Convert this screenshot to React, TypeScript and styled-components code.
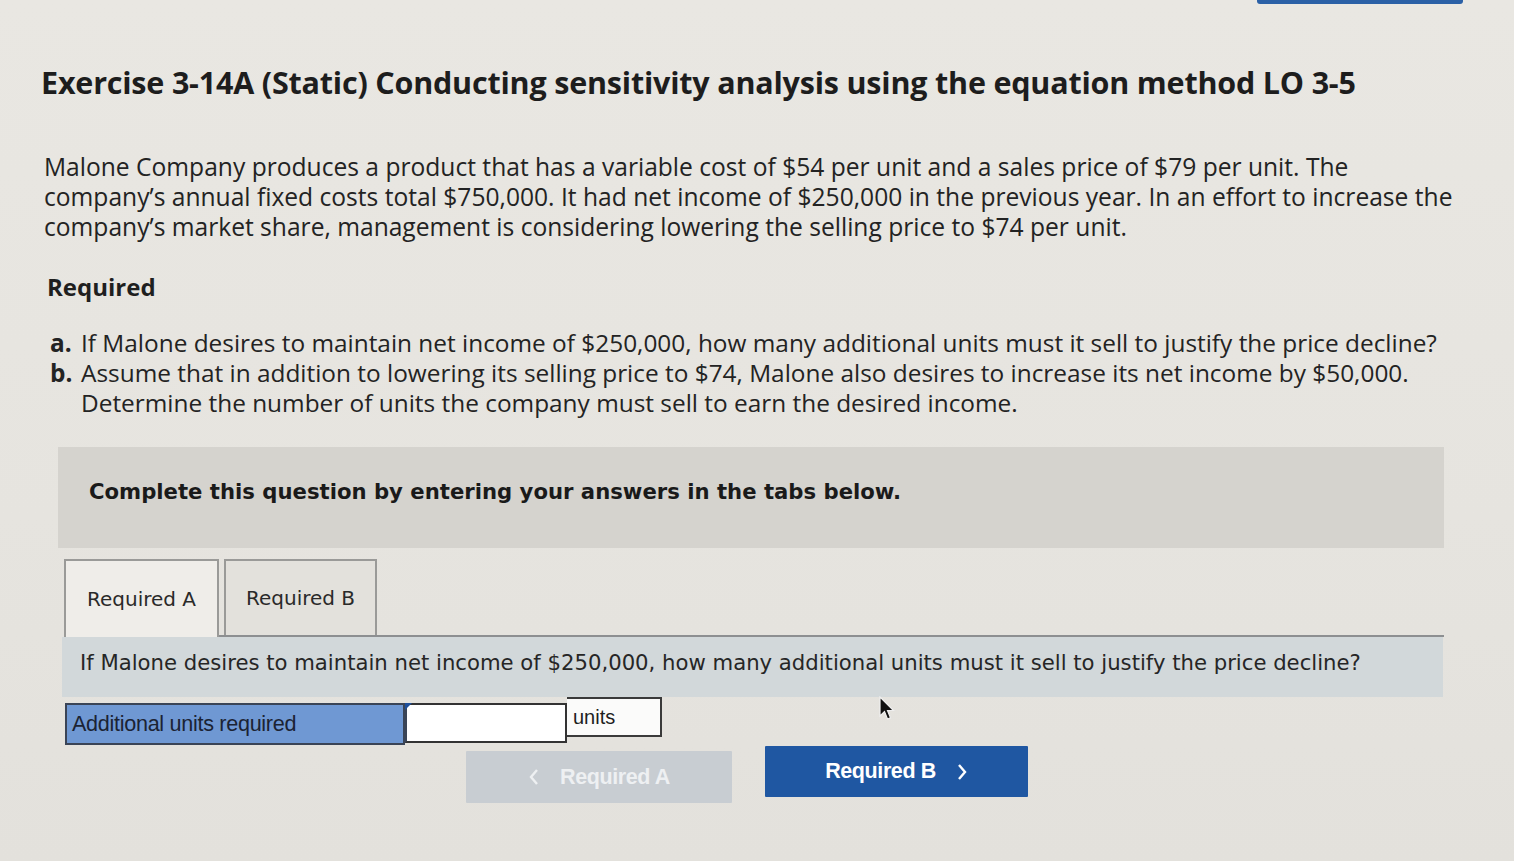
import React from "react";
import styled, { createGlobalStyle } from "styled-components";

const Global = createGlobalStyle`
  html, body { margin: 0; padding: 0; }
  body {
    background: #e7e5e0;
    width: 1514px;
    height: 861px;
    overflow: hidden;
    font-family: "Open Sans", "Liberation Sans", sans-serif;
    color: #222;
  }
`;

const Page = styled.div`
  position: relative;
  width: 1514px;
  height: 861px;
  background: linear-gradient(180deg, #e9e7e2 0%, #e6e4df 60%, #e3e1dc 100%);
`;

const TopBar = styled.div`
  position: absolute;
  left: 1257px;
  top: 0;
  width: 206px;
  height: 4px;
  background: #2b60a6;
  border-radius: 0 0 3px 3px;
`;

const Content = styled.div`
  padding: 62px 0 0 41px;
  display: flex;
  flex-direction: column;
`;

const Title = styled.h1`
  margin: 0;
  font-family: "Open Sans", sans-serif;
  font-weight: 700;
  font-size: 30.5px;
  line-height: 40px;
  color: #1d1d1d;
  letter-spacing: -0.2px;
  white-space: nowrap;
`;

const Para = styled.p`
  margin: 50px 0 0 3px;
  font-family: "Open Sans", sans-serif;
  font-size: 24.6px;
  line-height: 30px;
  color: #232323;
  white-space: nowrap;
`;

const Heading = styled.h2`
  margin: 30px 0 0 6px;
  font-family: "Open Sans", sans-serif;
  font-weight: 700;
  font-size: 24px;
  line-height: 30px;
  color: #1f1f1f;
`;

const List = styled.ol`
  list-style: none;
  margin: 26px 0 0 9px;
  padding: 0;
  font-family: "Open Sans", sans-serif;
  font-size: 24.4px;
  line-height: 30px;
  color: #232323;
  white-space: nowrap;
`;

const Item = styled.li`
  display: flex;
`;

const Marker = styled.span`
  font-weight: 700;
  width: 31px;
  flex: none;
`;

const Instruct = styled.div`
  margin: 29px 0 0 17px;
  width: 1386px;
  height: 101px;
  box-sizing: border-box;
  background: #d5d3ce;
  padding: 32px 0 0 31px;
  font-family: "DejaVu Sans", Verdana, sans-serif;
  font-weight: 700;
  font-size: 21.2px;
  color: #1a1a1a;
`;

const Tabs = styled.div`
  margin: 11px 0 0 23px;
  display: flex;
  align-items: flex-end;
  gap: 5px;
  width: 1380px;
  border-bottom: 2px solid #8d8f91;
`;

const Tab = styled.div<{ $active?: boolean }>`
  width: ${(p) => (p.$active ? 155 : 153)}px;
  height: ${(p) => (p.$active ? 78 : 76)}px;
  box-sizing: border-box;
  border: 2px solid #9a9a98;
  border-bottom: none;
  background: ${(p) => (p.$active ? "#efede9" : "#e3e1dc")};
  display: flex;
  align-items: center;
  justify-content: center;
  font-family: "DejaVu Sans", Verdana, sans-serif;
  font-size: 20px;
  color: #2a2a2a;
  margin-bottom: ${(p) => (p.$active ? -2 : 0)}px;
  position: relative;
  z-index: 1;
`;

const QuestionBar = styled.div`
  margin: 0 0 0 21px;
  width: 1381px;
  height: 60px;
  box-sizing: border-box;
  background: #d2d8da;
  padding: 13px 0 0 18px;
  font-family: "DejaVu Sans", Verdana, sans-serif;
  font-size: 21.2px;
  color: #262626;
  white-space: nowrap;
`;

const AnswerRow = styled.div`
  margin: 6px 0 0 24px;
  display: flex;
  align-items: flex-start;
`;

const LabelCell = styled.div`
  width: 340px;
  height: 42px;
  box-sizing: border-box;
  background: #6f98d3;
  border: 2px solid #3a4456;
  display: flex;
  align-items: center;
  padding-left: 5px;
  font-family: "Liberation Sans", Arial, sans-serif;
  font-size: 21.6px;
  letter-spacing: -0.3px;
  color: #1b2333;
`;

const InputCell = styled.div`
  width: 162px;
  height: 40px;
  box-sizing: border-box;
  background: #ffffff;
  border: 2px solid #333;
  border-left: 2px solid #3a4456;
  position: relative;
`;

const Caret = styled.div`
  position: absolute;
  left: -2px;
  top: -2px;
  width: 0;
  height: 0;
  border-top: 7px solid #1d4e9a;
  border-right: 7px solid transparent;
`;

const UnitCell = styled.div`
  width: 95px;
  height: 40px;
  margin-top: -6px;
  box-sizing: border-box;
  background: #fbfbfa;
  border: 2px solid #3a3a3a;
  border-left: none;
  padding: 7px 0 0 6px;
  font-family: "Liberation Sans", Arial, sans-serif;
  font-size: 20px;
  color: #1e1e1e;
`;

const Cursor = styled.svg`
  position: absolute;
  left: 878px;
  top: 696px;
`;

const NavRow = styled.div`
  margin: 6px 0 0 425px;
  display: flex;
  align-items: flex-start;
  gap: 33px;
`;

const NavButton = styled.div<{ $primary?: boolean }>`
  width: ${(p) => (p.$primary ? 263 : 266)}px;
  height: ${(p) => (p.$primary ? 51 : 52)}px;
  margin-top: ${(p) => (p.$primary ? -5 : 0)}px;
  background: ${(p) => (p.$primary ? "#1f57a2" : "#c8cdd2")};
  color: ${(p) => (p.$primary ? "#ffffff" : "#eef0f2")};
  display: flex;
  align-items: center;
  justify-content: center;
  gap: 20px;
  font-family: "Liberation Sans", Arial, sans-serif;
  font-weight: 700;
  font-size: 21.5px;
  letter-spacing: -0.4px;
  border-radius: 1px;
`;

const Chevron = styled.svg`
  flex: none;
`;

const ChevronLeft = () => (
  <Chevron width="12" height="20" viewBox="0 0 12 20">
    <path d="M9 3 L3 10 L9 17" fill="none" stroke="currentColor" strokeWidth="2.4" />
  </Chevron>
);

const ChevronRight = () => (
  <Chevron width="12" height="20" viewBox="0 0 12 20">
    <path d="M3 3 L9 10 L3 17" fill="none" stroke="currentColor" strokeWidth="2.4" />
  </Chevron>
);

export default function App() {
  return (
    <Page>
      <Global />
      <TopBar />
      <Content>
        <Title>
          Exercise 3-14A (Static) Conducting sensitivity analysis using the equation method LO 3-5
        </Title>
        <Para>
          Malone Company produces a product that has a variable cost of $54 per unit and a sales price of $79 per unit. The
          <br />
          company’s annual fixed costs total $750,000. It had net income of $250,000 in the previous year. In an effort to increase the
          <br />
          company’s market share, management is considering lowering the selling price to $74 per unit.
        </Para>
        <Heading>Required</Heading>
        <List>
          <Item>
            <Marker>a.</Marker>
            <span>
              If Malone desires to maintain net income of $250,000, how many additional units must it sell to justify the price decline?
            </span>
          </Item>
          <Item>
            <Marker>b.</Marker>
            <span>
              Assume that in addition to lowering its selling price to $74, Malone also desires to increase its net income by $50,000.
              <br />
              Determine the number of units the company must sell to earn the desired income.
            </span>
          </Item>
        </List>
        <Instruct>Complete this question by entering your answers in the tabs below.</Instruct>
        <Tabs>
          <Tab $active>Required A</Tab>
          <Tab>Required B</Tab>
        </Tabs>
        <QuestionBar>
          If Malone desires to maintain net income of $250,000, how many additional units must it sell to justify the price decline?
        </QuestionBar>
        <AnswerRow>
          <LabelCell>Additional units required</LabelCell>
          <InputCell>
            <Caret />
          </InputCell>
          <UnitCell>units</UnitCell>
        </AnswerRow>
        <NavRow>
          <NavButton>
            <ChevronLeft />
            Required A
          </NavButton>
          <NavButton $primary>
            Required B
            <ChevronRight />
          </NavButton>
        </NavRow>
      </Content>
      <Cursor width="18" height="26" viewBox="0 0 18 26">
        <path d="M2 1 L2 20 L6.5 15.5 L9.5 23 L12.5 21.8 L9.5 14.5 L15.5 14.5 Z" fill="#111" stroke="#eee" strokeWidth="1.2" />
      </Cursor>
    </Page>
  );
}
